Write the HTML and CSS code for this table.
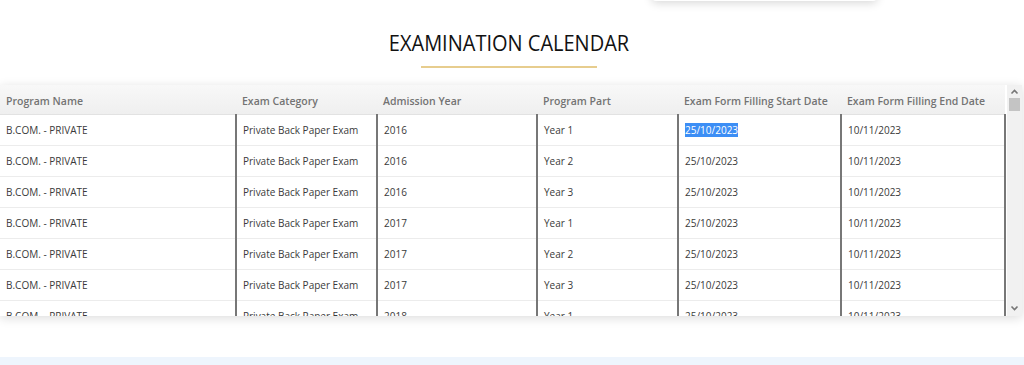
FILE: index.html
```html
<!DOCTYPE html>
<html lang="en">
<head>
<meta charset="utf-8">
<title>Examination Calendar</title>
<link rel="stylesheet" href="styles.css">
</head>
<body>
<div class="menu-card"></div>
<section class="calendar">
  <h1 class="calendar-title">EXAMINATION CALENDAR</h1>
  <div class="title-rule"></div>
  <div class="table-card">
    <div class="table-scroll">
      <table class="exam-table">
        <colgroup>
          <col class="c1"><col class="c2"><col class="c3"><col class="c4"><col class="c5"><col class="c6">
        </colgroup>
        <thead>
          <tr>
            <th>Program Name</th>
            <th>Exam Category</th>
            <th>Admission Year</th>
            <th>Program Part</th>
            <th>Exam Form Filling Start Date</th>
            <th>Exam Form Filling End Date</th>
          </tr>
        </thead>
        <tbody>
          <tr><td>B.COM. - PRIVATE</td><td>Private Back Paper Exam</td><td>2016</td><td>Year 1</td><td><span class="selected">25/10/2023</span></td><td>10/11/2023</td></tr>
          <tr><td>B.COM. - PRIVATE</td><td>Private Back Paper Exam</td><td>2016</td><td>Year 2</td><td>25/10/2023</td><td>10/11/2023</td></tr>
          <tr><td>B.COM. - PRIVATE</td><td>Private Back Paper Exam</td><td>2016</td><td>Year 3</td><td>25/10/2023</td><td>10/11/2023</td></tr>
          <tr><td>B.COM. - PRIVATE</td><td>Private Back Paper Exam</td><td>2017</td><td>Year 1</td><td>25/10/2023</td><td>10/11/2023</td></tr>
          <tr><td>B.COM. - PRIVATE</td><td>Private Back Paper Exam</td><td>2017</td><td>Year 2</td><td>25/10/2023</td><td>10/11/2023</td></tr>
          <tr><td>B.COM. - PRIVATE</td><td>Private Back Paper Exam</td><td>2017</td><td>Year 3</td><td>25/10/2023</td><td>10/11/2023</td></tr>
          <tr><td>B.COM. - PRIVATE</td><td>Private Back Paper Exam</td><td>2018</td><td>Year 1</td><td>25/10/2023</td><td>10/11/2023</td></tr>
          <tr><td>B.COM. - PRIVATE</td><td>Private Back Paper Exam</td><td>2018</td><td>Year 2</td><td>25/10/2023</td><td>10/11/2023</td></tr>
        </tbody>
      </table>
    </div>
    <div class="scrollbar">
      <svg class="arrow" width="15" height="12" viewBox="0 0 15 12"><path d="M4.5 7.5 L7.5 4.5 L10.5 7.5" fill="none" stroke="#777" stroke-width="1.6"/></svg>
      <div class="thumb"></div>
      <div class="track"></div>
      <svg class="arrow" width="15" height="12" viewBox="0 0 15 12"><path d="M4.5 4.5 L7.5 7.5 L10.5 4.5" fill="none" stroke="#777" stroke-width="1.6"/></svg>
    </div>
  </div>
</section>
<div class="footer-band"></div>
</body>
</html>
```
FILE: styles.css
```css
html, body {
  margin: 0;
  padding: 0;
  background: #ffffff;
  font-family: "Open Sans", "Noto Sans", sans-serif;
  color: #333;
  overflow: hidden;
}

body {
  position: relative;
  height: 365px;
}

/* dropdown panel hanging from the header above */
.menu-card {
  position: absolute;
  left: 652px;
  top: -40px;
  width: 225px;
  height: 41px;
  background: #fff;
  border-radius: 0 0 4px 4px;
  box-shadow: 0 2px 10px rgba(0, 0, 0, 0.16);
}

.calendar {
  display: flex;
  flex-direction: column;
  align-items: center;
  padding-top: 28px;
}

.calendar-title {
  margin: 0 6px 0 0;
  font-weight: 400;
  font-size: 20px;
  line-height: 30px;
  letter-spacing: 0;
  color: #111;
  transform: scaleY(1.1);
}

.title-rule {
  width: 176px;
  height: 2px;
  margin: 8px 6px 0 0;
  background: #e7cd8e;
}

.table-card {
  align-self: stretch;
  margin: 17px 2px 0 0;
  height: 231px;
  display: flex;
  background: #fff;
  box-shadow: 0 2px 10px rgba(0, 0, 0, 0.14);
  overflow: hidden;
}

.table-scroll {
  flex: 1;
  overflow: hidden;
}

.exam-table {
  width: 1005px;
  border-collapse: collapse;
  table-layout: fixed;
  font-size: 10px;
}

.c1 { width: 236px; }
.c2 { width: 141px; }
.c3 { width: 160px; }
.c4 { width: 141px; }
.c5 { width: 163px; }
.c6 { width: 164px; }

.exam-table th {
  height: 27px;
  padding: 2px 6px 0;
  text-align: left;
  font-size: 10.5px;
  font-weight: 600;
  color: #737373;
  background: linear-gradient(#f8f8f8, #efefef);
  border-bottom: 1px solid #e2e2e2;
  white-space: nowrap;
}

.exam-table td {
  height: 30px;
  padding: 0 6px;
  color: #3a3a3a;
  border-bottom: 1px solid #ececec;
  border-left: 2px solid #777;
  white-space: nowrap;
}

.exam-table td:first-child {
  border-left: none;
}

.exam-table td:last-child {
  border-right: 2px solid #777;
}

.selected {
  background: #3c8ef5;
  color: #fff;
}

.scrollbar {
  width: 15px;
  display: flex;
  flex-direction: column;
  background: #f1f1f1;
  padding-top: 1px;
  padding-bottom: 2px;
}

.arrow {
  display: block;
  flex: none;
}

.thumb {
  height: 13px;
  margin: 0 2px;
  background: #c4c4c4;
}

.track {
  flex: 1;
}

.footer-band {
  position: absolute;
  left: 0;
  right: 0;
  bottom: 0;
  height: 8px;
  background: #eef5fd;
}
```
